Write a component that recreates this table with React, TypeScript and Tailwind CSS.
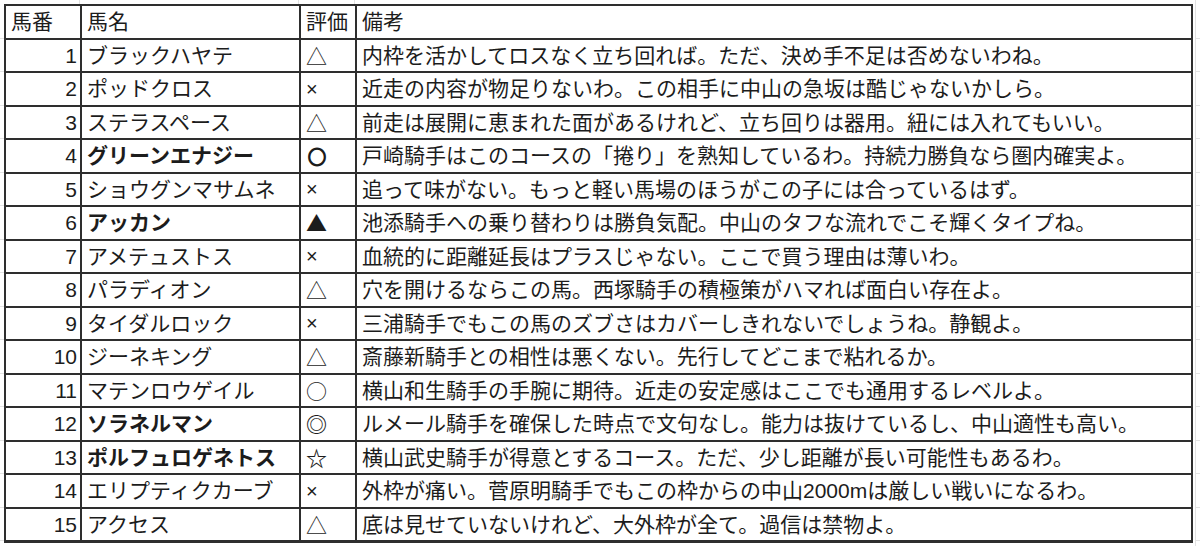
const rows: [number, string, string, string, boolean][] = [
  [1, 'ブラックハヤテ', '△', '内枠を活かしてロスなく立ち回れば。ただ、決め手不足は否めないわね。', false],
  [2, 'ポッドクロス', '×', '近走の内容が物足りないわ。この相手に中山の急坂は酷じゃないかしら。', false],
  [3, 'ステラスペース', '△', '前走は展開に恵まれた面があるけれど、立ち回りは器用。紐には入れてもいい。', false],
  [4, 'グリーンエナジー', '○', '戸崎騎手はこのコースの「捲り」を熟知しているわ。持続力勝負なら圏内確実よ。', true],
  [5, 'ショウグンマサムネ', '×', '追って味がない。もっと軽い馬場のほうがこの子には合っているはず。', false],
  [6, 'アッカン', '▲', '池添騎手への乗り替わりは勝負気配。中山のタフな流れでこそ輝くタイプね。', true],
  [7, 'アメテュストス', '×', '血統的に距離延長はプラスじゃない。ここで買う理由は薄いわ。', false],
  [8, 'パラディオン', '△', '穴を開けるならこの馬。西塚騎手の積極策がハマれば面白い存在よ。', false],
  [9, 'タイダルロック', '×', '三浦騎手でもこの馬のズブさはカバーしきれないでしょうね。静観よ。', false],
  [10, 'ジーネキング', '△', '斎藤新騎手との相性は悪くない。先行してどこまで粘れるか。', false],
  [11, 'マテンロウゲイル', '○', '横山和生騎手の手腕に期待。近走の安定感はここでも通用するレベルよ。', false],
  [12, 'ソラネルマン', '◎', 'ルメール騎手を確保した時点で文句なし。能力は抜けているし、中山適性も高い。', true],
  [13, 'ポルフュロゲネトス', '☆', '横山武史騎手が得意とするコース。ただ、少し距離が長い可能性もあるわ。', true],
  [14, 'エリプティクカーブ', '×', '外枠が痛い。菅原明騎手でもこの枠からの中山2000mは厳しい戦いになるわ。', false],
  [15, 'アクセス', '△', '底は見せていないけれど、大外枠が全て。過信は禁物よ。', false],
];

const cell = 'border-2 border-[#2e2e2e] h-[33.5px] px-[5px] py-0 whitespace-nowrap overflow-hidden';

function markClass(mark: string, bold: boolean) {
  if (mark === '×') return 'text-[20px]';
  if (mark === '○' && bold) return 'text-[18px] [-webkit-text-stroke:1.6px_#1c1c1c] pl-[7px]';
  return bold ? 'font-bold' : '';
}

export default function App() {
  return (
    <div
      className="w-[1200px] h-[546px] bg-white text-[#1c1c1c] text-[21px] leading-none flex overflow-hidden"
      style={{ fontFamily: '"Liberation Sans", "Noto Sans CJK JP", sans-serif' }}
    >
      {/* sheet gridlines on the left */}
      <div className="w-[4px] pt-[5px] shrink-0">
        {Array.from({ length: 16 }).map((_, i) => (
          <div key={i} className="h-[33.5px] border-b border-[#e2e2e2]" />
        ))}
      </div>

      <div className="w-[1189px] shrink-0">
        {/* sheet gridlines above */}
        <div className="flex h-[4px]">
          <div className="w-[76px] border-r border-[#e2e2e2]" />
          <div className="w-[219px] border-r border-[#e2e2e2]" />
          <div className="w-[56px] border-r border-[#e2e2e2]" />
          <div className="flex-1" />
        </div>

        <table className="border-collapse table-fixed w-[1189px] border-b-[3px] border-[#2e2e2e]">
          <colgroup>
            <col className="w-[76px]" />
            <col className="w-[219px]" />
            <col className="w-[56px]" />
            <col />
          </colgroup>
          <thead>
            <tr>
              <th className={`${cell} text-left font-normal`}>馬番</th>
              <th className={`${cell} text-left font-normal`}>馬名</th>
              <th className={`${cell} text-left font-normal px-[3px]`}>評価</th>
              <th className={`${cell} text-left font-normal`}>備考</th>
            </tr>
          </thead>
          <tbody>
            {rows.map(([no, name, mark, note, bold]) => (
              <tr key={no}>
                <td className={`${cell} text-right pr-[3px]`}>{no}</td>
                <td className={`${cell} ${bold ? 'font-bold' : ''}`}>{name}</td>
                <td
                  className={`${cell} ${markClass(mark, bold)}`}
                  style={mark === '×' ? undefined : { fontFamily: '"Noto Sans CJK JP", sans-serif' }}
                >
                  {mark}
                </td>
                <td className={cell}>{note}</td>
              </tr>
            ))}
          </tbody>
        </table>
      </div>

      {/* sheet gridlines on the right */}
      <div className="flex-1 pt-[5px] border-l border-[#e2e2e2] ml-[2px]">
        {Array.from({ length: 16 }).map((_, i) => (
          <div key={i} className="h-[33.5px] border-b border-[#e2e2e2]" />
        ))}
      </div>
    </div>
  );
}
